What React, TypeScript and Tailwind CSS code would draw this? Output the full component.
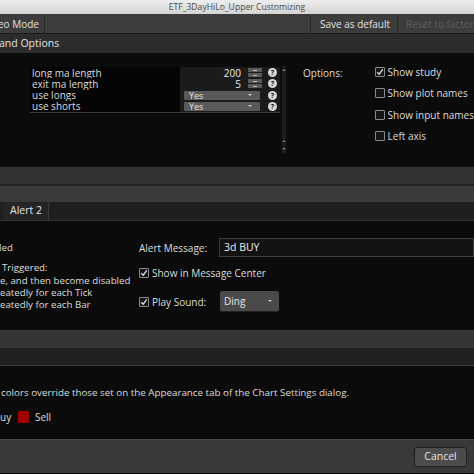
const FONT = { fontFamily: '"Open Sans", "DejaVu Sans", sans-serif' }

function Check({ checked }: { checked?: boolean }) {
  return (
    <span className="flex h-[10px] w-[10px] shrink-0 items-center justify-center rounded-[1px] border border-[#8a8a8a] bg-[#151515]">
      {checked && (
        <svg width="8" height="8" viewBox="0 0 8 8" fill="none">
          <path d="M1.2 4.2 L3.2 6.2 L6.8 1.4" stroke="#e0e0e0" strokeWidth="1.3" />
        </svg>
      )}
    </span>
  )
}

function Help() {
  return (
    <span className="flex h-[9px] w-[9px] items-center justify-center rounded-full bg-[#d8d8d8] text-[7px] font-bold leading-none text-[#111]">
      ?
    </span>
  )
}

function Spinner() {
  return (
    <div className="flex w-[14px] flex-col gap-[1px]">
      <span className="flex h-[4px] items-center justify-center bg-[#5a5a5a]">
        <span className="h-[1px] w-[4px] bg-[#bbb]" />
      </span>
      <span className="flex h-[4px] items-center justify-center bg-[#5a5a5a]">
        <span className="h-[1px] w-[4px] bg-[#bbb]" />
      </span>
    </div>
  )
}

function YesSelect() {
  return (
    <div className="flex h-[9px] w-[76px] items-center justify-between rounded-[1px] bg-[#595959] pl-[5px] pr-[8px]">
      <span className="text-[9px] leading-none text-[#e6e6e6]">Yes</span>
      <span className="h-0 w-0 border-x-[2px] border-t-[2px] border-x-transparent border-t-[#cfcfcf]" />
    </div>
  )
}

const inputs = [
  { label: 'long ma length', value: '200' },
  { label: 'exit ma length', value: '5' },
  { label: 'use longs', select: true },
  { label: 'use shorts', select: true },
]

export default function App() {
  return (
    <div className="h-[474px] w-[474px] overflow-hidden bg-[#0b0b0b] text-[10px] text-[#dcdcdc]" style={FONT}>
      {/* Title bar */}
      <div className="flex h-[14px] items-center justify-center bg-gradient-to-b from-[#eeeeee] to-[#d4d4d4] text-[8.6px] text-[#4a4a4a]">
        ETF_3DayHiLo_Upper Customizing
      </div>

      {/* Toolbar */}
      <div className="flex h-[20px] items-center border-b border-[#1b1b1b] bg-[#3c3c3c] pt-[2px] text-[10px]">
        <span className="ml-[-2px] w-[46px] whitespace-nowrap text-[#e2e2e2]">eo Mode</span>
        <span className="h-full w-px bg-[#2a2a2a]" />
        <span className="flex-1" />
        <span className="h-full w-px bg-[#2a2a2a]" />
        <span className="w-[86px] pl-[9px] whitespace-nowrap text-[#e2e2e2]">Save as default</span>
        <span className="h-full w-px bg-[#2a2a2a]" />
        <span className="w-[76px] overflow-hidden pl-[8px] whitespace-nowrap text-[#5c5c5c]">Reset to factory</span>
      </div>

      {/* Section header */}
      <div className="flex h-[19px] items-center bg-[#2c2c2c] text-[10.5px] text-[#e2e2e2]">
        <span className="ml-[-1px]">and Options</span>
      </div>

      {/* Inputs and options */}
      <div className="flex h-[114px] pt-[13px]">
        <div className="ml-[30px] flex h-[47px] flex-col border-b border-[#3a3a3a] pt-[1px]">
          {inputs.map((r) => (
            <div key={r.label} className="flex h-[11.5px] items-center">
              <span className="flex h-full w-[150px] items-center bg-[#050505] pl-[2px] leading-none">{r.label}</span>
              <span className="flex h-full w-[100px] items-center bg-[#1b1b1b]">
                {r.select ? (
                  <span className="ml-[4px] flex w-[78px] items-center">
                    <YesSelect />
                  </span>
                ) : (
                  <span className="flex w-[82px] items-center justify-end gap-[7px]">
                    <span className="leading-none text-[#ececec]">{r.value}</span>
                    <Spinner />
                  </span>
                )}
                <span className="ml-[6px]">
                  <Help />
                </span>
              </span>
            </div>
          ))}
        </div>
        <div className="ml-[2px] flex h-[87px] w-[10px] flex-col items-center justify-between bg-[#1c1c1c] py-[3px]">
          <span className="h-0 w-0 border-x-[2px] border-b-[2px] border-x-transparent border-b-[#777]" />
          <div className="flex flex-col items-center gap-[6px]">
            <span className="h-0 w-0 border-x-[2px] border-b-[2px] border-x-transparent border-b-[#777]" />
            <span className="h-0 w-0 border-x-[2px] border-t-[2px] border-x-transparent border-t-[#777]" />
          </div>
        </div>
        <div className="ml-[17px] pt-[2px] leading-none">Options:</div>
        <div className="ml-[32px] flex flex-col gap-[11px] pt-[1px] text-[10px] leading-none">
          <label className="flex items-center gap-[3px]"><Check checked /><span>Show study</span></label>
          <label className="flex items-center gap-[3px]"><Check /><span className="whitespace-nowrap">Show plot names</span></label>
          <label className="mt-[1px] flex items-center gap-[3px]"><Check /><span className="whitespace-nowrap">Show input names</span></label>
          <label className="flex items-center gap-[3px]"><Check /><span>Left axis</span></label>
        </div>
      </div>

      {/* Collapsed sections */}
      <div className="h-[19px] border-b-2 border-[#222] bg-[#333333]" />
      <div className="h-[16px] bg-[#3a3a3a]" />

      {/* Tabs */}
      <div className="flex h-[19px] border-b border-[#333] bg-[#1f1f1f]">
        <div className="ml-[3px] flex w-[46px] items-center border-r border-[#3a3a3a] bg-[#242424] pl-[7px] text-[10.5px] text-[#e6e6e6]">
          Alert 2
        </div>
      </div>

      {/* Alert content */}
      <div className="flex h-[109px]">
        <div className="w-[139px] shrink-0 overflow-hidden whitespace-nowrap pt-[21px] text-[9.7px] leading-[12px]">
          <div className="ml-[-1px]">led</div>
          <div className="mt-[8px] ml-[2px]">Triggered:</div>
          <div className="mt-[1px]">e, and then become disabled</div>
          <div>eatedly for each Tick</div>
          <div>eatedly for each Bar</div>
        </div>
        <div className="flex flex-1 flex-col pt-[17px]">
          <div className="flex items-center">
            <span className="w-[80px] leading-none">Alert Message:</span>
            <div className="flex h-[19px] flex-1 items-center border border-[#3c3c3c] bg-[#121212] pl-[4px] text-[10.5px] text-[#f0f0f0]">
              3d BUY
            </div>
          </div>
          <label className="mt-[11px] flex items-center gap-[3px] leading-none">
            <Check checked />
            <span className="whitespace-nowrap">Show in Message Center</span>
          </label>
          <div className="mt-[13px] flex items-center">
            <label className="flex w-[81px] items-center gap-[3px] leading-none">
              <Check checked />
              <span>Play Sound:</span>
            </label>
            <div className="flex h-[21px] w-[59px] items-center justify-between rounded-[2px] border-b border-[#222] bg-[#4a4a4a] pl-[4px] pr-[7px] text-[#e6e6e6]">
              <span>Ding</span>
              <span className="h-0 w-0 border-x-[2px] border-t-[2px] border-x-transparent border-t-[#cfcfcf]" />
            </div>
          </div>
        </div>
      </div>

      {/* Collapsed sections */}
      <div className="h-[18px] bg-[#353535]" />
      <div className="h-[18px] border-b border-[#3c3c3c] bg-[#202020]" />

      {/* Colors */}
      <div className="flex h-[73px] flex-col pt-[22px]">
        <div className="ml-[1px] whitespace-nowrap text-[9.8px] leading-none">
          colors override those set on the Appearance tab of the Chart Settings dialog.
        </div>
        <div className="mt-[13px] flex items-center leading-none">
          <span className="w-[18px]">uy</span>
          <span className="h-[12px] w-[11px] rounded-[1px] bg-[#a00000]" />
          <span className="ml-[6px]">Sell</span>
        </div>
      </div>

      {/* Footer */}
      <div className="flex h-[34px] items-center justify-end border-t border-[#4a4a4a] bg-[#383838] pr-[7px]">
        <button className="h-[20px] w-[53px] rounded-[3px] border border-[#1e1e1e] bg-[#4c4c4c] text-[10.5px] text-[#e4e4e4]" style={FONT}>
          Cancel
        </button>
      </div>
    </div>
  )
}
